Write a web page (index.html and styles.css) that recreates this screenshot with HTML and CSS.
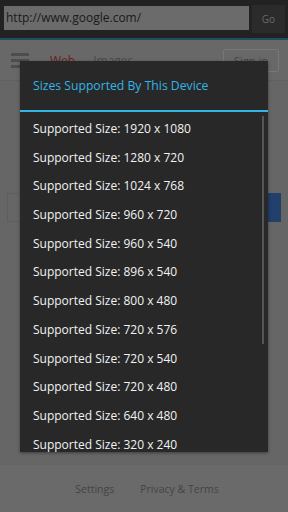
FILE: index.html
```html
<!DOCTYPE html>
<html lang="en">
<head>
    <meta charset="UTF-8">
    <meta name="viewport" content="width=device-width, initial-scale=1.0">
    <title>Sizes Supported</title>
    <link rel="stylesheet" href="styles.css">
</head>
<body>
    <div class="topbar">
        <div class="url">http://www.google.com/</div>
        <div class="go">Go</div>
    </div>

    <div class="page">
        <div class="header">
            <div class="burger"><span></span><span></span><span></span></div>
            <span class="tab tab-web">Web</span>
            <span class="tab">Images</span>
            <span class="signin">Sign in</span>
        </div>
        <div class="body-area">
            <div class="search">
                <div class="search-box"></div>
                <div class="search-btn"></div>
            </div>
        </div>
        <div class="footer">
            <span>Settings</span>
            <span>Privacy &amp; Terms</span>
        </div>
    </div>

    <div class="dialog">
        <div class="dialog-title">Sizes Supported By This Device</div>
        <div class="dialog-list">
            <div class="item">Supported Size: 1920 x 1080</div>
            <div class="item">Supported Size: 1280 x 720</div>
            <div class="item">Supported Size: 1024 x 768</div>
            <div class="item">Supported Size: 960 x 720</div>
            <div class="item">Supported Size: 960 x 540</div>
            <div class="item">Supported Size: 896 x 540</div>
            <div class="item">Supported Size: 800 x 480</div>
            <div class="item">Supported Size: 720 x 576</div>
            <div class="item">Supported Size: 720 x 540</div>
            <div class="item">Supported Size: 720 x 480</div>
            <div class="item">Supported Size: 640 x 480</div>
            <div class="item">Supported Size: 320 x 240</div>
            <div class="scrollbar"></div>
        </div>
    </div>
</body>
</html>
```

FILE: styles.css
```css
body {
    margin: 0;
    width: 288px;
    height: 512px;
    overflow: hidden;
    background: #666;
    font-family: "Open Sans", "Noto Sans", sans-serif;
}
.topbar {
    display: flex;
    align-items: center;
    gap: 3px;
    height: 38px;
    padding: 0 3px 0 4px;
    background: #222;
    border-bottom: 2px solid #1d4f5e;
    box-sizing: content-box;
}
.url {
    flex: 1;
    height: 24px;
    margin-top: -2px;
    background: #6b6b6b;
    color: #1a1a1a;
    font-size: 12px;
    line-height: 24px;
    padding-left: 2px;
}
.go {
    width: 33px;
    height: 28px;
    background: #2b2b2b;
    color: #6a6a6a;
    font-size: 10px;
    line-height: 28px;
    text-align: center;
}
.page {
    display: flex;
    flex-direction: column;
    height: 472px;
}
.header {
    display: flex;
    align-items: center;
    height: 40px;
    padding: 0 9px 0 11px;
    background: #686868;
    border-bottom: 1px solid #606060;
}
.burger {
    display: flex;
    flex-direction: column;
    gap: 3px;
    width: 18px;
    margin-right: 21px;
}
.burger span {
    height: 3px;
    background: #4d4d4d;
}
.tab {
    font-size: 12px;
    color: #4a4a4a;
    margin-right: 18px;
}
.tab-web {
    color: #6e1a1a;
}
.signin {
    margin-left: auto;
    border: 1px solid #777;
    border-radius: 2px;
    padding: 3px 10px;
    font-size: 11px;
    color: #444;
}
.body-area {
    flex: 1;
    padding: 112px 7px 0 7px;
}
.search {
    display: flex;
    height: 29px;
}
.search-box {
    flex: 1;
    border: 1px solid #5e5e5e;
}
.search-btn {
    width: 15px;
    background: #233f6b;
}
.footer {
    display: flex;
    justify-content: center;
    gap: 26px;
    height: 47px;
    padding-left: 6px;
    background: #6a6a6a;
    font-size: 10.5px;
    color: #444;
    line-height: 48px;
}
.dialog {
    position: absolute;
    left: 20px;
    top: 61px;
    width: 248px;
    height: 391px;
    background: #282828;
    box-shadow: 0 1px 3px rgba(0, 0, 0, 0.4);
    overflow: hidden;
}
.dialog-title {
    height: 49px;
    padding-left: 13px;
    line-height: 50px;
    font-size: 12.2px;
    color: #33b5e5;
    border-bottom: 2px solid #33b5e5;
}
.dialog-list {
    position: relative;
    padding-top: 3px;
}
.item {
    height: 28.7px;
    line-height: 28.7px;
    padding-left: 13px;
    font-size: 12px;
    color: #f2f2f2;
}
.scrollbar {
    position: absolute;
    right: 4px;
    top: 4px;
    width: 2px;
    height: 228px;
    background: #555;
}
```
